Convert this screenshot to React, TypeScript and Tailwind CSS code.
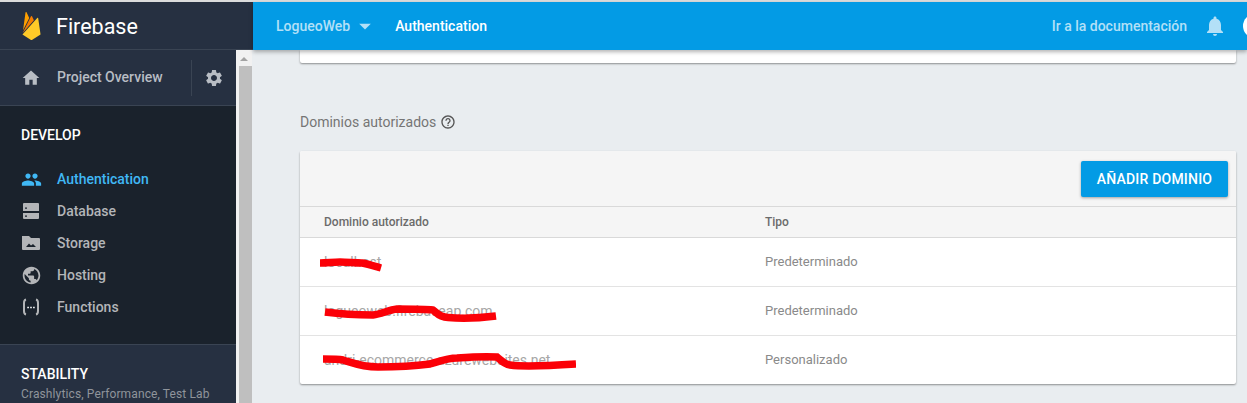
import React from "react";
import { MdHome, MdSettings, MdPeople, MdPublic, MdNotifications, MdHelpOutline, MdArrowDropDown } from "react-icons/md";

const font = { fontFamily: "Roboto, sans-serif" };

const FirebaseLogo = () => (
  <svg viewBox="0 0 24 24" preserveAspectRatio="none" className="h-[28px] w-[25px]">
    <path fill="#FFA000" d="M3.89 15.672L6.255.461A.542.542 0 0 1 7.27.288l2.543 4.771z" />
    <path fill="#F57C00" d="M14.3 7.147l-1.82-3.482a.542.542 0 0 0-.96 0L3.53 17.984z" />
    <path fill="#FFCA28" d="M20.684 19.364l-2.25-14a.54.54 0 0 0-.919-.295L3.316 19.365l7.856 4.427a1.621 1.621 0 0 0 1.588 0z" />
  </svg>
);

const DatabaseIcon = () => (
  <svg viewBox="0 0 18 18" className="h-[18px] w-[18px]" fill="currentColor">
    <path d="M2 1h14a1 1 0 0 1 1 1v7H1V2a1 1 0 0 1 1-1z" />
    <path d="M1 11h16v5a1 1 0 0 1-1 1H2a1 1 0 0 1-1-1z" />
    <path d="M3 5.5h2v1.3H3zM3 13.5h2v1.3H3z" fill="#1a222c" />
  </svg>
);

const StorageIcon = () => (
  <svg viewBox="0 0 18 16" className="h-[16px] w-[18px]" fill="currentColor">
    <path d="M0 1h7l2 2h8a1 1 0 0 1 1 1v10a1 1 0 0 1-1 1H1a1 1 0 0 1-1-1z" />
    <path d="M4 12l3-3.5 2 2 2-1.5 3 3z" fill="#1a222c" />
  </svg>
);

const FunctionsIcon = () => (
  <svg viewBox="0 0 18 18" className="h-[18px] w-[18px]" fill="none" stroke="currentColor" strokeWidth="2">
    <path d="M4 1.5C2.2 2 2 3 2 5v8c0 2 .2 3 2 3.5" />
    <path d="M14 1.5c1.8.5 2 1.5 2 3.5v8c0 2-.2 3-2 3.5" />
    <path d="M5.2 9.5h1.8M8.1 9.5h1.8M11 9.5h1.8" stroke="#e3e6e8" strokeWidth="1.4" />
  </svg>
);

const NavItem = ({ icon, label, active }: { icon: React.ReactNode; label: string; active?: boolean }) => (
  <div className={`flex h-[32px] items-center pl-[22px] text-[14px] font-medium ${active ? "text-[#40b8f5]" : "text-[#b3b5b8]"}`}>
    <div className="flex w-[35px] items-center">{icon}</div>
    <span>{label}</span>
  </div>
);

const DomainRow = ({ name, type, width, d }: { name: string; type: string; width: number; d: string }) => (
  <div className="flex h-[49px] items-center border-b border-[#e3e3e3] text-[13px] text-[#8a8a8a] last:h-[48px] last:border-b-0">
    <div className="relative w-[465px] pl-[24px]">
      <span className="text-[14px] text-[#a6a6a6]">{name}</span>
      {/* the red marker over the domain names */}
      <svg
        width={width}
        height="26"
        viewBox={`0 0 ${width} 26`}
        className="absolute left-[20px] top-0"
        fill="none"
        stroke="#fb0007"
        strokeWidth="7.5"
      >
        <path d={d} />
      </svg>
    </div>
    <div>{type}</div>
  </div>
);

export default function App() {
  return (
    <div className="flex h-[403px] w-[1247px] flex-col overflow-hidden bg-[#e9edf0]" style={font}>
      <div className="h-[2px] shrink-0 bg-[#dcdcdc]" />
      <div className="relative z-10 flex h-[48px] shrink-0">
        <div className="flex w-[253px] items-center border-b border-[#3a4453] bg-[#263041] pl-[19px]">
          <FirebaseLogo />
          <span className="ml-[12px] pt-[3px] text-[21.5px] text-white">Firebase</span>
        </div>
        <div className="flex min-w-0 flex-1 items-center bg-[#039be5] pl-[23px] shadow-[0_2px_4px_rgba(0,0,0,0.3)]">
          <span className="text-[14px] font-medium text-[#b3e0f7]">LogueoWeb</span>
          <MdArrowDropDown className="ml-[-1px] w-[32px] text-[28px] text-[#b3e0f7]" />
          <span className="ml-[14px] text-[14px] font-medium text-white">Authentication</span>
          <span className="ml-auto text-[14px] font-medium text-[#b3e0f7]">Ir a la documentación</span>
          <MdNotifications className="ml-[16px] shrink-0 text-[24px] text-[#b3e0f7]" />
          <div className="ml-[16px] mr-[-20px] h-[24px] w-[24px] shrink-0 rounded-full bg-white" />
        </div>
      </div>
      <div className="flex min-h-0 flex-1">
        <div className="flex w-[236px] shrink-0 flex-col bg-[#1a222c]">
          <div className="flex h-[56px] shrink-0 items-center border-b border-[#3a4453] bg-[#263041] pl-[21px]">
            <MdHome className="text-[20px] text-[#b8bdc4]" />
            <span className="ml-[16px] w-[134px] text-[14px] font-medium text-[#b8bdc4]">Project Overview</span>
            <div className="h-[36px] w-px bg-[#3a4453]" />
            <MdSettings className="ml-[12px] text-[20px] text-[#b8bdc4]" />
          </div>
          <div className="h-[239px] shrink-0 border-b border-[#3a4453]">
            <div className="pl-[21px] pt-[21px] text-[14px] font-medium leading-[16px] text-white">DEVELOP</div>
            <div className="mt-[20px]">
              <NavItem active icon={<MdPeople className="ml-[-1px] text-[21px]" />} label="Authentication" />
              <NavItem icon={<DatabaseIcon />} label="Database" />
              <NavItem icon={<StorageIcon />} label="Storage" />
              <NavItem icon={<MdPublic className="ml-[-1px] text-[21px]" />} label="Hosting" />
              <NavItem icon={<FunctionsIcon />} label="Functions" />
            </div>
          </div>
          <div className="flex-1 bg-[#263041] pl-[21px] pt-[21px]">
            <div className="text-[14px] font-medium leading-[16px] text-white">STABILITY</div>
            <div className="mt-[3px] whitespace-nowrap text-[12px] tracking-[0.12px] text-[#8f949b]">Crashlytics, Performance, Test Lab</div>
          </div>
        </div>
        <div className="flex w-[16px] shrink-0 flex-col items-center bg-[#f1f1f1]">
          <div className="mt-[7px] h-0 w-0 border-x-[4px] border-b-[4px] border-x-transparent border-b-[#a3a3a3]" />
          <div className="ml-[2px] mt-[5px] w-[13px] flex-1 bg-[#bfbfbf]" />
        </div>
        <div className="min-w-0 flex-1 pl-[48px] pr-[11px]">
          <div className="h-[13px] rounded-b-[2px] bg-white shadow-[0_1px_2px_rgba(0,0,0,0.4)]" />
          <div className="mt-[49px] flex h-[20px] items-center text-[14px] text-[#757575]">
            Dominios autorizados
            <MdHelpOutline className="ml-[4px] text-[16px] text-[#555]" />
          </div>
          <div className="mt-[19px] overflow-hidden rounded-[2px] bg-white shadow-[0_1px_2px_rgba(0,0,0,0.4)]">
            <div className="flex h-[56px] items-start justify-end border-b border-[#d9d9d9] bg-[#f5f5f5] pr-[8px] pt-[10px]">
              <button className="h-[36px] w-[147px] rounded-[2px] bg-[#039be5] text-[14px] font-medium tracking-[0.2px] text-white shadow-[0_1px_3px_rgba(0,0,0,0.35)]">
                AÑADIR DOMINIO
              </button>
            </div>
            <div className="flex h-[31px] items-center border-b border-[#d9d9d9] bg-[#f5f5f5] text-[12px] font-medium text-[#6b6b6b]">
              <div className="w-[465px] pl-[24px]">Dominio autorizado</div>
              <div>Tipo</div>
            </div>
            <DomainRow name="localhost" type="Predeterminado" width={62} d="M0 11C7 11 13 10 20 10C28 10 34 11 42 11C48 12 54 14 61 16" />
            <DomainRow name="logueoweb.firebaseap.com" type="Predeterminado" width={178} d="M5 11C20 13 40 14 53 14C62 13 68 9 77 8C90 8 105 8 113 9C117 12 119 16 128 16.5C145 18 160 17 176 15" />
            <DomainRow name="andri-ecommerce.azurewebsites.net" type="Personalizado" width={256} d="M3 9C12 9 18 9 23 10C33 13 42 17 58 17C80 17 95 16 110 14C120 11 128 8 137 8C150 7 165 6 177 7C181 10 183 14 190 15C205 17 225 16 256 14" />
          </div>
        </div>
      </div>
    </div>
  );
}
